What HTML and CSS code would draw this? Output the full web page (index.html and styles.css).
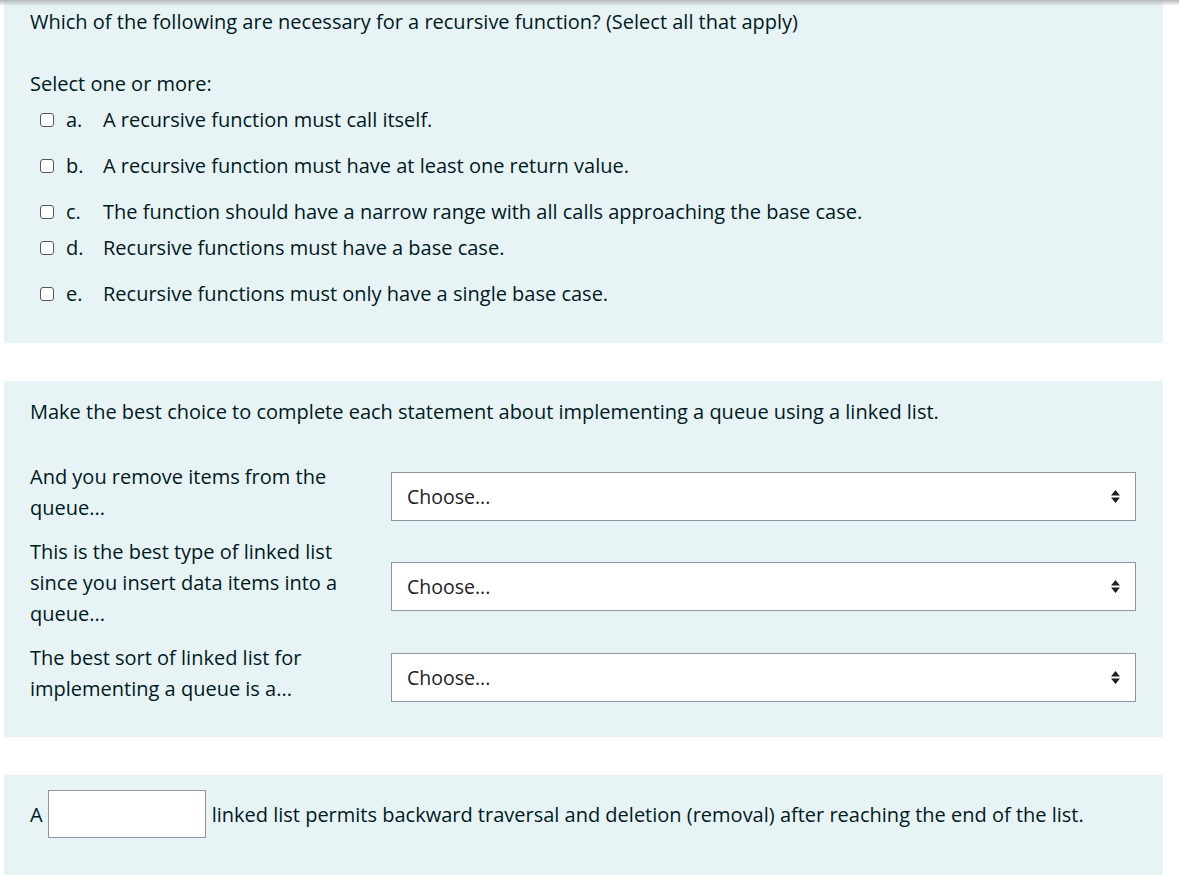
FILE: index.html
```html
<!DOCTYPE html>
<html>
<head>
<meta charset="utf-8">
<link rel="stylesheet" href="styles.css">
</head>
<body>
<div class="topshade"></div>
<div class="panel p1">
  <div class="qtext">Which of the following are necessary for a recursive function? (Select all that apply)</div>
  <div class="prompt">Select one or more:</div>
  <div class="answers">
    <div class="opt"><span class="cb"></span><span class="let">a.</span><span>A recursive function must call itself.</span></div>
    <div class="opt"><span class="cb"></span><span class="let">b.</span><span>A recursive function must have at least one return value.</span></div>
    <div class="opt tight"><span class="cb"></span><span class="let">c.</span><span>The function should have a narrow range with all calls approaching the base case.</span></div>
    <div class="opt"><span class="cb"></span><span class="let">d.</span><span>Recursive functions must have a base case.</span></div>
    <div class="opt last"><span class="cb"></span><span class="let">e.</span><span>Recursive functions must only have a single base case.</span></div>
  </div>
</div>
<div class="panel p2">
  <div class="qtext">Make the best choice to complete each statement about implementing a queue using a linked list.</div>
  <div class="rows">
    <div class="row"><div class="lbl">And you remove items from the queue...</div><div class="sel"><span>Choose...</span><svg class="arr" width="9" height="13" viewBox="0 0 9 13"><path d="M4.5 0L9 5.5H0Z M0 7.5H9L4.5 13Z" fill="#1d2125"/></svg></div></div>
    <div class="row"><div class="lbl">This is the best type of linked list since you insert data items into a queue...</div><div class="sel"><span>Choose...</span><svg class="arr" width="9" height="13" viewBox="0 0 9 13"><path d="M4.5 0L9 5.5H0Z M0 7.5H9L4.5 13Z" fill="#1d2125"/></svg></div></div>
    <div class="row"><div class="lbl">The best sort of linked list for implementing a queue is a...</div><div class="sel"><span>Choose...</span><svg class="arr" width="9" height="13" viewBox="0 0 9 13"><path d="M4.5 0L9 5.5H0Z M0 7.5H9L4.5 13Z" fill="#1d2125"/></svg></div></div>
  </div>
</div>
<div class="panel p3">
  <div class="fill"><span>A</span><span class="inp"></span><span>linked list permits backward traversal and deletion (removal) after reaching the end of the list.</span></div>
</div>
</body>
</html>
```

FILE: styles.css
```css
html, body { margin: 0; padding: 0; background: #fff; }
body {
  font-family: "Open Sans", "Noto Sans", sans-serif;
  font-size: 20px;
  color: #001a1e;
  width: 1179px;
  height: 875px;
  overflow: hidden;
  position: relative;
}
.topshade {
  position: absolute; left: 0; top: 0; width: 100%; height: 6px;
  background: linear-gradient(#b5b8ba, rgba(255,255,255,0));
}
.panel {
  background: #e7f3f5;
  margin-left: 4px;
  width: 1159px;
  box-sizing: border-box;
  padding-left: 26px;
  padding-right: 27px;
}
.p1 { padding-top: 8px; padding-bottom: 35px; }
.qtext { line-height: 28px; }
.prompt { line-height: 28px; margin-top: 34px; }
.answers { margin-top: 8px; }
.opt { display: flex; align-items: center; line-height: 28px; margin-bottom: 18px; }
.opt.tight { margin-bottom: 8px; }
.opt.last { margin-bottom: 0; }
.cb {
  width: 12px; height: 12px; border: 1px solid #55595d; border-radius: 3px;
  background: #fff; margin-left: 10px; margin-right: 12px; flex: none;
}
.let { width: 37px; flex: none; }
.p2 { margin-top: 38px; padding-top: 17px; padding-bottom: 33px; }
.rows { margin-top: 35px; display: flex; flex-direction: column; gap: 13px; }
.row { display: flex; align-items: center; }
.lbl { width: 322px; line-height: 31px; margin-right: 39px; flex: none; }
.sel {
  flex: 1; height: 49px; box-sizing: border-box; margin-top: 8px;
  border: 1px solid #8f959e; background: #fff;
  display: flex; align-items: center; justify-content: space-between;
  padding: 0 15px 0 15px; font-size: 19.5px; color: #1d2125;
}
.p3 { margin-top: 38px; padding-top: 15px; height: 100px; }
.fill { display: flex; align-items: center; }
.inp {
  width: 158px; height: 48px; box-sizing: border-box; border: 1px solid #8f959e;
  background: #fff; margin: 0 6px 0 5px;
}
```
